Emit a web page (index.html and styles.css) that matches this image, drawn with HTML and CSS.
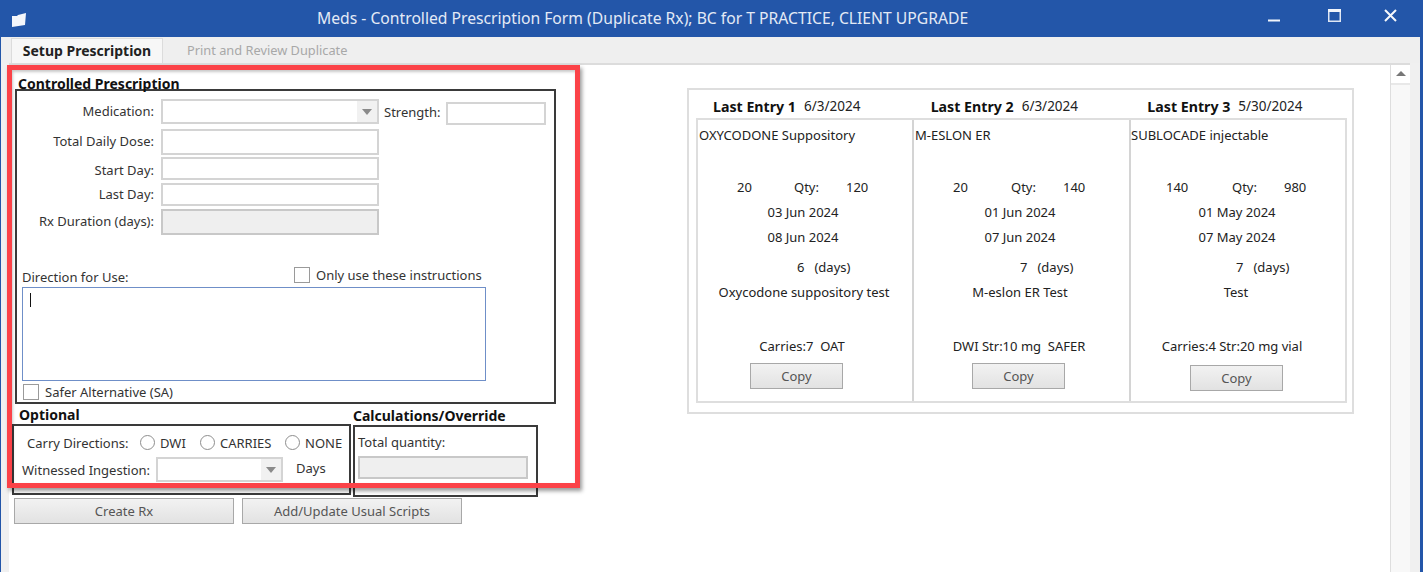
FILE: index.html
```html
<!DOCTYPE html>
<html lang="en">
<head>
<meta charset="utf-8">
<title>Meds - Controlled Prescription Form</title>
<link rel="stylesheet" href="styles.css">
</head>
<body>
<div class="window">
  <header class="titlebar">
    <svg class="app-icon" width="16" height="16" viewBox="0 0 16 16"><path d="M1 4 L6 4 L7 3 L15 1 L14 13 L1 15 Z" fill="#f4f6fb"/></svg>
    <div class="title">Meds - Controlled Prescription Form (Duplicate Rx); BC for T PRACTICE, CLIENT UPGRADE</div>
    <div class="controls">
      <svg class="ctl-min" width="12" height="3" viewBox="0 0 12 3"><rect width="12" height="2" y="0.5" fill="#f2f5fb"/></svg>
      <svg class="ctl-max" width="13" height="13" viewBox="0 0 13 13"><rect x="0.75" y="0.75" width="11.5" height="11.5" fill="none" stroke="#dfe6f3" stroke-width="1.5"/><rect x="0" y="0" width="13" height="3" fill="#f2f5fb"/></svg>
      <svg class="ctl-close" width="13" height="13" viewBox="0 0 13 13"><path d="M1 1 L12 12 M12 1 L1 12" stroke="#f6f8fc" stroke-width="2" fill="none"/></svg>
    </div>
  </header>
  <nav class="tabs">
    <div class="tab active">Setup Prescription</div>
    <div class="tab disabled">Print and Review Duplicate</div>
  </nav>
  <main class="panel">
    <section class="form">
      <h2 class="heading main-heading">Controlled Prescription</h2>
      <div class="box rx-box">
        <div class="row row-med">
          <label class="lbl">Medication:</label>
          <div class="combo combo-med"><span class="arrow"></span></div>
          <label class="lbl-strength">Strength:</label>
          <div class="input input-strength"></div>
        </div>
        <div class="row row-dose"><label class="lbl">Total Daily Dose:</label><div class="input input-wide tall"></div></div>
        <div class="row row-start"><label class="lbl">Start Day:</label><div class="input input-wide"></div></div>
        <div class="row row-last"><label class="lbl">Last Day:</label><div class="input input-wide"></div></div>
        <div class="row row-dur"><label class="lbl">Rx Duration (days):</label><div class="input input-wide tall off"></div></div>
        <div class="dir-row">
          <span class="dir-label">Direction for Use:</span>
          <span class="check"></span>
          <span class="check-text">Only use these instructions</span>
        </div>
        <div class="textarea"><span class="caret"></span></div>
        <div class="safer-row"><span class="check check-safer"></span><span>Safer Alternative (SA)</span></div>
      </div>
      <div class="lower">
        <div class="group-opt">
          <h2 class="heading opt-heading">Optional</h2>
          <div class="box opt-box">
            <div class="carry-row">
              <span class="carry-label">Carry Directions:</span>
              <span class="radio r1"></span><span class="rt1">DWI</span>
              <span class="radio r2"></span><span class="rt2">CARRIES</span>
              <span class="radio r3"></span><span class="rt3">NONE</span>
            </div>
            <div class="wit-row">
              <span class="wit-label">Witnessed Ingestion:</span>
              <div class="combo combo-wit"><span class="arrow"></span></div>
              <span class="days">Days</span>
            </div>
          </div>
        </div>
        <div class="group-calc">
          <h2 class="heading calc-heading">Calculations/Override</h2>
          <div class="box calc-box">
            <div class="qty-label">Total quantity:</div>
            <div class="input off qty-input"></div>
          </div>
        </div>
      </div>
      <div class="actions">
        <button class="btn btn-big" type="button">Create Rx</button>
        <button class="btn btn-big" type="button">Add/Update Usual Scripts</button>
      </div>
    </section>

    <section class="history">
      <div class="heads">
        <div class="head h1"><b>Last Entry 1</b><span>6/3/2024</span></div>
        <div class="head h2"><b>Last Entry 2</b><span>6/3/2024</span></div>
        <div class="head h3"><b>Last Entry 3</b><span>5/30/2024</span></div>
      </div>
      <div class="cols">
        <article class="col col1">
          <div class="drug">OXYCODONE Suppository</div>
          <div class="qty"><span class="q-a">20</span><span class="q-b">Qty:</span><span class="q-c">120</span></div>
          <div class="date d-one">03 Jun 2024</div>
          <div class="date">08 Jun 2024</div>
          <div class="dur"><span>6</span><span>(days)</span></div>
          <div class="note">Oxycodone suppository test</div>
          <div class="extra">Carries:7&nbsp; OAT</div>
          <button class="btn copy" type="button">Copy</button>
        </article>
        <article class="col col2">
          <div class="drug">M-ESLON ER</div>
          <div class="qty"><span class="q-a">20</span><span class="q-b">Qty:</span><span class="q-c">140</span></div>
          <div class="date d-one">01 Jun 2024</div>
          <div class="date">07 Jun 2024</div>
          <div class="dur"><span>7</span><span>(days)</span></div>
          <div class="note">M-eslon ER Test</div>
          <div class="extra">DWI Str:10 mg&nbsp; SAFER</div>
          <button class="btn copy" type="button">Copy</button>
        </article>
        <article class="col col3">
          <div class="drug">SUBLOCADE injectable</div>
          <div class="qty"><span class="q-a">140</span><span class="q-b">Qty:</span><span class="q-c">980</span></div>
          <div class="date d-one">01 May 2024</div>
          <div class="date">07 May 2024</div>
          <div class="dur"><span>7</span><span>(days)</span></div>
          <div class="note">Test</div>
          <div class="extra">Carries:4 Str:20 mg vial</div>
          <button class="btn copy" type="button">Copy</button>
        </article>
      </div>
    </section>

    <aside class="scrollbar"><div class="scroll-up"><span class="up-arrow"></span></div></aside>
  </main>
  <div class="annotation"></div>
</div>
</body>
</html>
```

FILE: styles.css
```css
* { box-sizing: border-box; }
html, body { margin: 0; height: 100%; overflow: hidden; background: #fff; }
body { font-family: "Noto Sans", "Liberation Sans", sans-serif; font-size: 13px; color: #333; }
.window {
  position: relative; width: 1423px; height: 572px; display: flex; flex-direction: column;
  background: #f0f0f0; border-left: 1px solid #2356a9; border-right: 3px solid #2356a9;
}
.titlebar {
  height: 37px; flex: none; background: #2356a9; display: flex; align-items: center;
  margin-right: -3px; margin-left: -1px; padding-left: 11px; position: relative;
}
.app-icon { flex: none; margin-top: 2px; }
.title {
  flex: none; margin-left: 290px; width: 652px; color: #e3eaf6; font-size: 15.7px; white-space: nowrap; margin-top: -2px;
  font-family: "Noto Sans", sans-serif;
}
.controls { display: flex; align-items: center; margin-left: 299px; margin-top: -1px; }
.ctl-min { margin-top: 5px; }
.ctl-max { margin-left: 48px; margin-top: -6px; }
.ctl-close { margin-left: 43px; margin-top: -6px; }

.tabs { height: 26px; flex: none; display: flex; padding: 1px 0 0 10px; background: #efefef; }
.tab { height: 25px; line-height: 24px; }
.tab.active { width: 152px; text-align: center; font-size: 14px; font-weight: 700; color: #222; background: #f7f7f7; border: 1px solid #dcdcdc; border-bottom: 0; }
.tab.disabled { margin-left: 24px; color: #a8a8a8; font-size: 12.8px; }

.panel {
  flex: 1; margin-left: 8px; margin-right: 10px; background: #fff; border-top: 2px solid #dcdcdc;
  display: flex; position: relative; min-height: 0;
}
.form { width: 580px; flex: none; padding: 11px 0 0 3px; }
.heading { margin: 0; font-size: 14px; font-weight: 700; color: #111; line-height: 16px; white-space: nowrap; }
.main-heading { margin-left: 6px; height: 13px; }
.box { border: 2px solid #3a3a3a; }
.rx-box { width: 541px; height: 315px; margin-left: 3px; padding-top: 8px; }
.row { display: flex; align-items: flex-start; }
.lbl { width: 137px; text-align: right; margin-right: 7px; line-height: 24px; flex: none; }
.input, .combo { border: 2px solid #d4d4d4; background: #fff; flex: none; }
.input-wide { width: 218px; height: 23px; }
.tall { height: 26px; }
.off { background: #efefef; border-color: #c8c8c8; }
.row-med { height: 25px; }
.combo { position: relative; height: 25px; }
.combo-med { width: 218px; }
.arrow { position: absolute; right: 0; top: 0; bottom: 0; width: 20px; background: #f1f1f1; }
.arrow::after {
  content: ""; position: absolute; left: 5px; top: 8px; border: 5px solid transparent; border-top: 6px solid #8a8a8a; border-bottom: 0;
}
.lbl-strength { margin-left: 5px; margin-top: 2px; width: 58px; line-height: 23px; white-space: nowrap; }
.input-strength { width: 100px; height: 23px; margin-left: 4px; margin-top: 3px; }
.row-dose { margin-top: 5px; height: 26px; }
.row-start { margin-top: 2px; height: 23px; }
.row-start .lbl { line-height: 26px; }
.row-last { margin-top: 3px; height: 23px; }
.row-last .lbl { line-height: 22px; }
.row-dur { margin-top: 3px; height: 26px; }
.dir-row { display: flex; margin-top: 32px; height: 20px; align-items: flex-start; line-height: 16px; }
.dir-label { margin-left: 5px; width: 272px; margin-top: 2px; flex: none; }
.check { width: 16px; height: 16px; border: 1.5px solid #9a9a9a; background: #fff; flex: none; }
.check-text { margin-left: 6px; }
.textarea { margin: 0 0 0 5px; width: 464px; height: 94px; border: 1px solid #6f8fc8; padding: 5px 0 0 7px; }
.caret { display: block; width: 1px; height: 14px; background: #111; }
.safer-row { display: flex; align-items: center; gap: 6px; margin: 3px 0 0 6px; line-height: 16px; }
.lower { display: flex; height: 83px; margin-top: 2px; }
.group-opt { width: 341px; flex: none; }
.opt-heading { margin-left: 7px; margin-top: 1px; }
.opt-box { width: 339px; height: 71px; margin-top: 1px; position: relative; }
.carry-row { display: flex; align-items: center; height: 21px; margin-top: 6px; }
.carry-label { margin-left: 13px; width: 113px; flex: none; }
.radio { width: 15px; height: 15px; border: 1.5px solid #8e8e8e; border-radius: 50%; flex: none; background: #fff; }
.rt1 { margin-left: 5px; width: 40px; }
.rt2 { margin-left: 5px; width: 65px; }
.rt3 { margin-left: 5px; }
.wit-row { display: flex; align-items: center; margin-top: 4px; }
.wit-label { margin-left: 8px; width: 134px; flex: none; white-space: nowrap; }
.combo-wit { width: 127px; }
.days { margin-left: 13px; margin-top: -3px; }
.group-calc { width: 186px; flex: none; margin-left: 0; }
.calc-heading { margin-top: 2px; }
.calc-box { width: 185px; height: 72px; margin-top: 1px; padding: 6px 0 0 3px; }
.qty-label { line-height: 18px; }
.qty-input { width: 170px; height: 23px; margin-top: 5px; }
.actions { display: flex; gap: 8px; margin: 9px 0 0 2px; }
.btn {
  font: inherit; color: #555; background: linear-gradient(#f2f2f2, #e2e2e2); border: 1.5px solid #a8a8a8; padding: 0;
}
.btn-big { width: 220px; height: 26px; }

.history { width: 667px; height: 326px; flex: none; margin: 23px 0 0 98px; border: 2px solid #dedede; padding: 0 6px 0 7px; }
.heads { display: flex; height: 28px; }
.head { width: 217px; display: flex; align-items: center; gap: 8px; color: #222; padding-top: 4px; white-space: nowrap; font-size: 13.5px; }
.head b { color: #111; font-size: 14.2px; }
.h1 { padding-left: 17px; }
.h2 { padding-left: 18px; }
.h3 { padding-left: 18px; }
.cols { display: flex; border: 2px solid #dedede; height: 285px; width: 651px; }
.col { width: 217px; flex: none; display: flex; flex-direction: column; position: relative; border-left: 2px solid #d4d4d4; }
.col1 { border-left: 0; width: 214px; }
.col3 { width: 216px; }
.drug { margin-top: 6px; line-height: 18px; height: 18px; padding-left: 1px; color: #222; white-space: nowrap; }
.col2 .drug { padding-left: 1px; }
.col3 .drug { padding-left: 0; }
.qty { display: flex; height: 18px; line-height: 18px; margin-top: 34px; color: #222; }
.q-a { margin-left: 39px; width: 57px; }
.q-b { width: 52px; }
.col2 .q-a { margin-left: 39px; width: 58px; }
.col3 .q-a { margin-left: 35px; width: 66px; }
.date { text-align: center; width: 216px; height: 25px; line-height: 25px; color: #222; margin-left: -2px; }
.d-one { margin-top: 4px; }
.col1 .date { margin-left: -3px; }
.col2 .date { margin-left: -2px; }
.col3 .date { margin-left: -2px; }
.dur { display: flex; gap: 10px; height: 18px; line-height: 18px; margin-top: 8px; color: #222; }
.col1 .dur { margin-left: 99px; }
.col2 .dur { margin-left: 106px; }
.col3 .dur { margin-left: 105px; }
.note { text-align: center; width: 216px; margin-left: -2px; height: 18px; line-height: 18px; margin-top: 7px; color: #222; white-space: nowrap; }
.col2 .note { margin-left: -2px; }
.col3 .note { margin-left: -3px; }
.extra { text-align: center; width: 216px; margin-left: -4px; height: 18px; line-height: 18px; margin-top: 36px; color: #222; white-space: nowrap; }
.col2 .extra { margin-left: -3px; }
.col3 .extra { margin-left: -7px; }
.copy { width: 93px; height: 26px; margin-top: 8px; color: #555; }
.col1 .copy { margin-left: 52px; }
.col2 .copy { margin-left: 58px; }
.col3 .copy { margin-left: 59px; margin-top: 10px; }

.scrollbar { position: absolute; right: 0; top: 0; bottom: 0; width: 20px; background: #f8f8f8; border-left: 1px solid #dedede; }
.scroll-up { height: 20px; background: #fff; border-bottom: 2px solid #e8e8e8; position: relative; }
.up-arrow { position: absolute; left: 5px; top: 6px; border: 5px solid transparent; border-bottom: 5px solid #777; border-top: 0; }

.annotation {
  position: absolute; left: 6px; top: 65px; width: 573px; height: 423px;
  border: 5px solid #fb4248; box-shadow: 2px 3px 4px rgba(0,0,0,.4), inset 1px 2px 3px rgba(0,0,0,.22); pointer-events: none;
}
```
